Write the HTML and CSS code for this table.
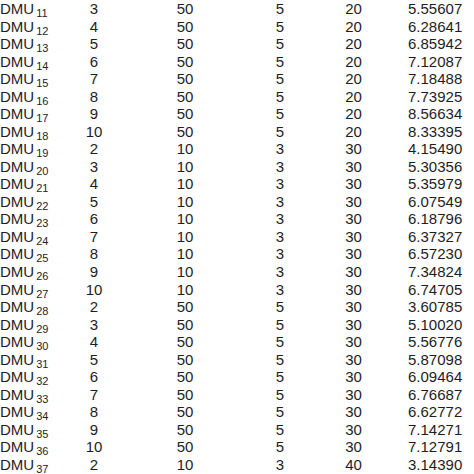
FILE: index.html
```html
<!DOCTYPE html>
<html>
<head>
<meta charset="utf-8">
<link rel="stylesheet" href="styles.css">
</head>
<body>
<div class="table">
<div class="row"><span class="c1">DMU<sub>11</sub></span><span class="c2">3</span><span class="c3">50</span><span class="c4">5</span><span class="c5">20</span><span class="c6">5.55607</span></div>
<div class="row"><span class="c1">DMU<sub>12</sub></span><span class="c2">4</span><span class="c3">50</span><span class="c4">5</span><span class="c5">20</span><span class="c6">6.28641</span></div>
<div class="row"><span class="c1">DMU<sub>13</sub></span><span class="c2">5</span><span class="c3">50</span><span class="c4">5</span><span class="c5">20</span><span class="c6">6.85942</span></div>
<div class="row"><span class="c1">DMU<sub>14</sub></span><span class="c2">6</span><span class="c3">50</span><span class="c4">5</span><span class="c5">20</span><span class="c6">7.12087</span></div>
<div class="row"><span class="c1">DMU<sub>15</sub></span><span class="c2">7</span><span class="c3">50</span><span class="c4">5</span><span class="c5">20</span><span class="c6">7.18488</span></div>
<div class="row"><span class="c1">DMU<sub>16</sub></span><span class="c2">8</span><span class="c3">50</span><span class="c4">5</span><span class="c5">20</span><span class="c6">7.73925</span></div>
<div class="row"><span class="c1">DMU<sub>17</sub></span><span class="c2">9</span><span class="c3">50</span><span class="c4">5</span><span class="c5">20</span><span class="c6">8.56634</span></div>
<div class="row"><span class="c1">DMU<sub>18</sub></span><span class="c2">10</span><span class="c3">50</span><span class="c4">5</span><span class="c5">20</span><span class="c6">8.33395</span></div>
<div class="row"><span class="c1">DMU<sub>19</sub></span><span class="c2">2</span><span class="c3">10</span><span class="c4">3</span><span class="c5">30</span><span class="c6">4.15490</span></div>
<div class="row"><span class="c1">DMU<sub>20</sub></span><span class="c2">3</span><span class="c3">10</span><span class="c4">3</span><span class="c5">30</span><span class="c6">5.30356</span></div>
<div class="row"><span class="c1">DMU<sub>21</sub></span><span class="c2">4</span><span class="c3">10</span><span class="c4">3</span><span class="c5">30</span><span class="c6">5.35979</span></div>
<div class="row"><span class="c1">DMU<sub>22</sub></span><span class="c2">5</span><span class="c3">10</span><span class="c4">3</span><span class="c5">30</span><span class="c6">6.07549</span></div>
<div class="row"><span class="c1">DMU<sub>23</sub></span><span class="c2">6</span><span class="c3">10</span><span class="c4">3</span><span class="c5">30</span><span class="c6">6.18796</span></div>
<div class="row"><span class="c1">DMU<sub>24</sub></span><span class="c2">7</span><span class="c3">10</span><span class="c4">3</span><span class="c5">30</span><span class="c6">6.37327</span></div>
<div class="row"><span class="c1">DMU<sub>25</sub></span><span class="c2">8</span><span class="c3">10</span><span class="c4">3</span><span class="c5">30</span><span class="c6">6.57230</span></div>
<div class="row"><span class="c1">DMU<sub>26</sub></span><span class="c2">9</span><span class="c3">10</span><span class="c4">3</span><span class="c5">30</span><span class="c6">7.34824</span></div>
<div class="row"><span class="c1">DMU<sub>27</sub></span><span class="c2">10</span><span class="c3">10</span><span class="c4">3</span><span class="c5">30</span><span class="c6">6.74705</span></div>
<div class="row"><span class="c1">DMU<sub>28</sub></span><span class="c2">2</span><span class="c3">50</span><span class="c4">5</span><span class="c5">30</span><span class="c6">3.60785</span></div>
<div class="row"><span class="c1">DMU<sub>29</sub></span><span class="c2">3</span><span class="c3">50</span><span class="c4">5</span><span class="c5">30</span><span class="c6">5.10020</span></div>
<div class="row"><span class="c1">DMU<sub>30</sub></span><span class="c2">4</span><span class="c3">50</span><span class="c4">5</span><span class="c5">30</span><span class="c6">5.56776</span></div>
<div class="row"><span class="c1">DMU<sub>31</sub></span><span class="c2">5</span><span class="c3">50</span><span class="c4">5</span><span class="c5">30</span><span class="c6">5.87098</span></div>
<div class="row"><span class="c1">DMU<sub>32</sub></span><span class="c2">6</span><span class="c3">50</span><span class="c4">5</span><span class="c5">30</span><span class="c6">6.09464</span></div>
<div class="row"><span class="c1">DMU<sub>33</sub></span><span class="c2">7</span><span class="c3">50</span><span class="c4">5</span><span class="c5">30</span><span class="c6">6.76687</span></div>
<div class="row"><span class="c1">DMU<sub>34</sub></span><span class="c2">8</span><span class="c3">50</span><span class="c4">5</span><span class="c5">30</span><span class="c6">6.62772</span></div>
<div class="row"><span class="c1">DMU<sub>35</sub></span><span class="c2">9</span><span class="c3">50</span><span class="c4">5</span><span class="c5">30</span><span class="c6">7.14271</span></div>
<div class="row"><span class="c1">DMU<sub>36</sub></span><span class="c2">10</span><span class="c3">50</span><span class="c4">5</span><span class="c5">30</span><span class="c6">7.12791</span></div>
<div class="row"><span class="c1">DMU<sub>37</sub></span><span class="c2">2</span><span class="c3">10</span><span class="c4">3</span><span class="c5">40</span><span class="c6">3.14390</span></div>
</div>
</body>
</html>
```
FILE: styles.css
```css
html, body {
  margin: 0;
  padding: 0;
  background: #ffffff;
}
body {
  font-family: "Liberation Sans", Arial, sans-serif;
  font-size: 15px;
  color: #1e1e1e;
  width: 474px;
  height: 474px;
  overflow: hidden;
}
.table {
  display: flex;
  flex-direction: column;
}
.row {
  display: grid;
  grid-template-columns: 60px 68px 114px 76px 71px 85px;
  height: 17.54px;
  line-height: 17.54px;
  white-space: nowrap;
}
.row > span {
  text-align: center;
}
.row > .c1 {
  text-align: left;
}
.row > .c6 {
  text-align: left;
  padding-left: 19px;
}
sub {
  font-size: 11px;
  line-height: 0;
  vertical-align: -3px;
  margin-left: 2px;
}
```
